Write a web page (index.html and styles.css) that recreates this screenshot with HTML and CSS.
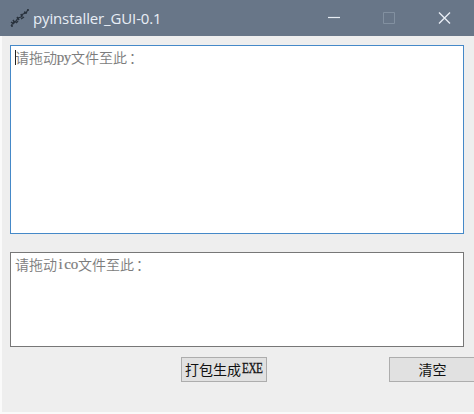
FILE: index.html
```
<!DOCTYPE html>
<html lang="zh-CN">
<head>
<meta charset="utf-8">
<title>pyinstaller_GUI-0.1</title>
<link rel="stylesheet" href="styles.css">
</head>
<body>
<div class="window">
  <header class="titlebar">
    <svg class="logo" width="20" height="20" viewBox="0 0 20 20"><path d="M1 18L3 15L6 13L8 10L11 9L13 6L16 5L18 1.500" fill="none" stroke="#29323d" stroke-width="1.2"/><path d="M1 14l3 2M3 12l2 3M7 9l2 3M11 6l1 3M14 4l3 1M6 15l2-2M11 11l3-2M1 18h2M17 2h2" stroke="#29323d" stroke-width="1.500"/></svg>
    <h1 class="title">pyinstaller_GUI-0.1</h1>
    <div class="controls">
      <svg width="55" height="36" viewBox="0 0 55 36"><path d="M21 17.5h12" stroke="#e8edf4" stroke-width="1.2"/></svg>
      <svg width="55" height="36" viewBox="0 0 55 36"><path d="M21.5 12.5h11v11h-11z" fill="none" stroke="#8290a0"/></svg>
      <svg width="55" height="36" viewBox="0 0 55 36"><path d="M22 12.500l11 11M33 12.500l-11 11" stroke="#e8edf4" stroke-width="1.4"/></svg>
    </div>
  </header>
  <main class="content">
    <div class="drop drop-py"><i class="caret"></i>请拖动<span class="latin"><b>p</b><b>y</b></span>文件至此<span class="colon">：</span></div>
    <div class="drop drop-ico">请拖动<span class="latin"><b>i</b><b>c</b><b>o</b></span>文件至此<span class="colon">：</span></div>
    <div class="actions">
      <button class="btn build">打包生成<span class="latin caps"><b>E</b><b>X</b><b>E</b></span></button>
      <button class="btn clear">清空</button>
    </div>
  </main>
</div>
</body>
</html>
```
FILE: styles.css
```
* { box-sizing: border-box; }
body { margin: 0; overflow: hidden; background: #fafafa; }
.window {
  width: 474px;
  height: 414px;
  font-family: "Liberation Sans", "Noto Sans CJK SC", sans-serif;
}
.titlebar {
  display: flex;
  align-items: center;
  height: 36px;
  padding-left: 10px;
  background: #687688;
}
.logo { flex: none; }
.title {
  margin: 0 0 0 3px;
  font: 400 15px/36px "Open Sans", "Noto Sans", sans-serif;
  letter-spacing: -0.14px;
  color: #e8eef6;
  white-space: nowrap;
}
.controls { display: flex; margin-left: auto; margin-right: 2px; }
.content {
  height: 376px;
  margin-left: 2px;
  padding: 9px 10px 0 8px;
  background: #eee;
}
.drop {
  display: flex;
  align-items: flex-start;
  padding: 1px 0 0 4px;
  border: 1px solid #777;
  background: #fff;
  color: #7c7c7c;
  font: 350 14px/20px "Noto Sans CJK SC", sans-serif;
}
.drop-py { height: 189px; border-color: #4589c8; position: relative; }
.drop-ico { height: 95px; margin-top: 18px; }
.caret {
  position: absolute;
  left: 4px;
  top: 4px;
  width: 1px;
  height: 15px;
  background: #222;
}
.latin { display: flex; font-family: "Liberation Serif", serif; }
.drop .latin { font-size: 15px; -webkit-text-stroke: 0.2px #7c7c7c; }
.latin b {
  display: flex;
  justify-content: center;
  width: 7px;
  font-weight: 400;
}
.colon { padding-left: 2px; }
.caps { padding-left: 1px; }
.caps b { transform: scaleX(0.8); -webkit-text-stroke: 0.3px #111; }
.actions { display: flex; padding-top: 10px; }
.btn {
  display: flex;
  flex: none;
  align-items: center;
  justify-content: center;
  height: 25px;
  padding: 0;
  border: 1px solid #adadad;
  background: #e1e1e1;
  color: #111;
  font: 400 14px/18px "Noto Sans CJK SC", sans-serif;
}
.build { width: 86px; margin-left: 171px; padding-bottom: 1px; }
.clear { width: 87px; margin-left: 122px; padding-bottom: 1px; }
```
